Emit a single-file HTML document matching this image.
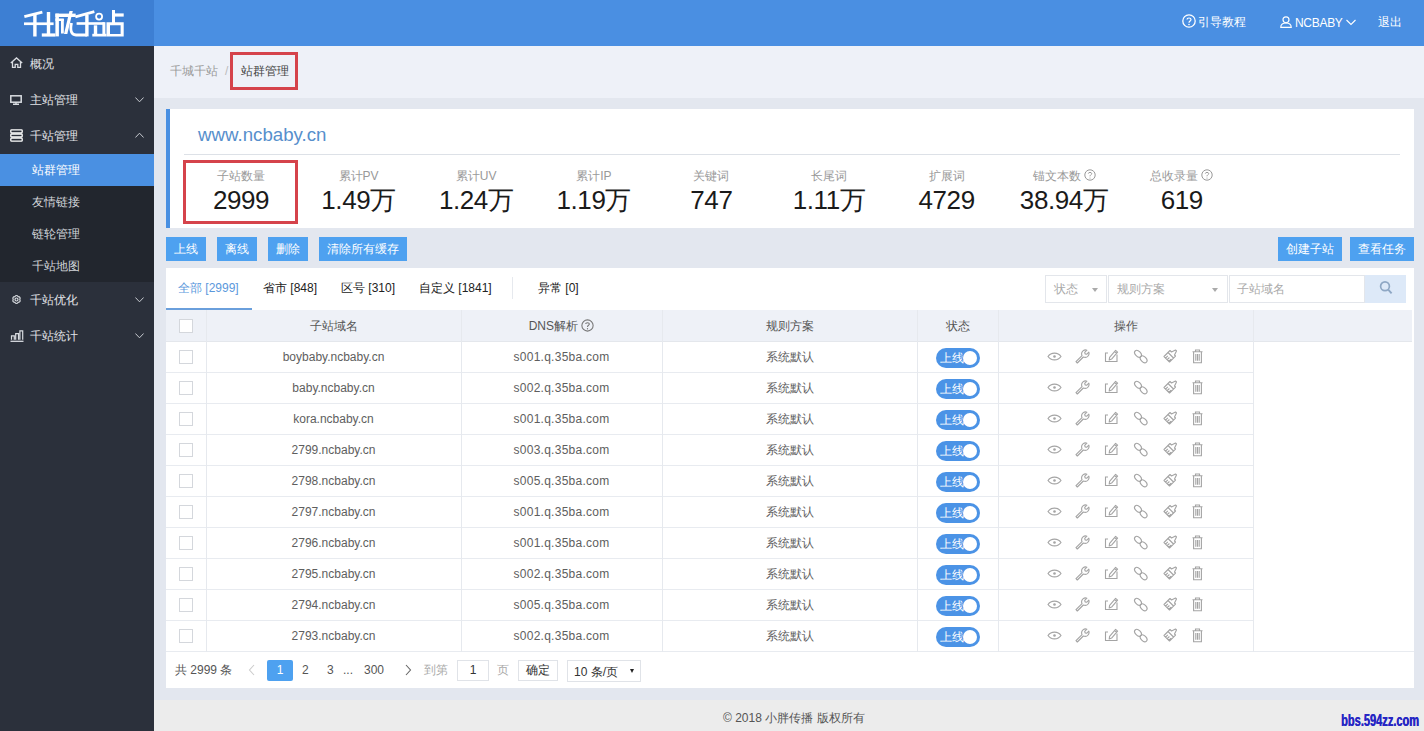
<!DOCTYPE html>
<html><head><meta charset="utf-8">
<style>
*{margin:0;padding:0;box-sizing:border-box}
html,body{width:1424px;height:731px;overflow:hidden;font-family:"Liberation Sans",sans-serif;background:#eef1f8;position:relative}
.a{position:absolute}
#hdr{left:0;top:0;width:1424px;height:46px;background:#4a8fe2}
#logo{left:0;top:0;width:154px;height:46px;background:#3d7fd3}
#side{left:0;top:46px;width:154px;height:685px;background:#2b303b}
#subbg{left:0;top:154px;width:154px;height:128px;background:#22262e}
#act{left:0;top:154px;width:154px;height:32px;background:#4a90e2}
.mi{position:absolute;left:30px;height:36px;line-height:36px;color:#e2e4e8;font-size:12px;white-space:nowrap}
.sub{position:absolute;left:32px;height:32px;line-height:32px;color:#d3d6db;font-size:12px;white-space:nowrap}
.ico{position:absolute;left:10px}
.chev{position:absolute;left:135px}
#crumb{left:154px;top:46px;width:1270px;height:52px;background:#eef1f8}
#band{left:154px;top:98px;width:1270px;height:602px;background:#e3e7ef}
#foot{left:154px;top:700px;width:1270px;height:31px;background:#ececec}
.card{position:absolute;background:#fff}
.stat{position:absolute;top:160px;width:118px;text-align:center}
.stat .l{font-size:12px;color:#999;line-height:16px;height:16px;margin-top:8px;white-space:nowrap}
.stat .v{font-size:26px;color:#1a1a1a;line-height:30px;margin-top:1px;letter-spacing:-0.4px;white-space:nowrap}
.btn{position:absolute;top:237px;height:24px;line-height:24px;background:#4ea1f0;color:#fff;font-size:12px;text-align:center;white-space:nowrap}
.tab{position:absolute;top:280px;font-size:12px;line-height:16px;color:#222;white-space:nowrap}
.th{position:absolute;top:0;height:32px;line-height:32px;font-size:12px;color:#555;text-align:center;white-space:nowrap}
.cell{position:absolute;top:0;height:31px;line-height:30px;font-size:12px;color:#5e5e5e;text-align:center;white-space:nowrap}
.vl{position:absolute;width:1px;background:#e6e9ee}
.hl{position:absolute;height:1px;background:#e8ebf0}
.cb{position:absolute;width:14px;height:14px;border:1px solid #d4d7dc;background:#fff}
.tg{position:absolute;width:44px;height:20px;border-radius:10px;background:#4b93e6}
.tg b{position:absolute;right:3px;top:3px;width:14px;height:14px;border-radius:7px;background:#fff}
.tg span{position:absolute;left:4px;top:0;line-height:20px;font-size:12px;color:#fff;font-weight:normal}
.op{position:absolute}
</style></head><body>
<div class="a" id="hdr"></div><div class="a" id="logo"></div>
<div class="a" id="side"></div><div class="a" id="subbg"></div><div class="a" id="act"></div>
<svg class="a" style="left:0;top:0" width="154" height="46" viewBox="0 0 154 46"><g fill="#fff"><path d="M24 15.2 L42 10.8 L42.7 13.5 L24.7 17.9 Z"/><rect x="24" y="22.4" width="29.6" height="2.7"/><rect x="33.2" y="14.5" width="3.4" height="22"/><rect x="46.8" y="12" width="3.4" height="23.6"/><rect x="41.8" y="33.4" width="13.6" height="3.2"/><rect x="55.4" y="13.6" width="20.3" height="3.4"/><rect x="55.4" y="13.6" width="3.5" height="22.8"/><rect x="61" y="19" width="2.8" height="14.5"/><rect x="55.4" y="18.5" width="8.4" height="2.5"/><path d="M69.5 11 L72.8 11 L67.3 34 L64 34 Z"/><path d="M75 15.6 L94 10.2 L94.7 12.9 L75.7 18.3 Z"/><rect x="76.6" y="22.2" width="27.8" height="2.6"/><rect x="85.2" y="15" width="3.4" height="21.4"/><rect x="92.3" y="33.8" width="14.2" height="2.7"/><rect x="93.8" y="25.3" width="3.4" height="9.5"/><rect x="102.4" y="22.2" width="3" height="12.5"/><rect x="112" y="10" width="3" height="13"/><rect x="113" y="13.4" width="10.7" height="3.2"/><path d="M106.5 22.2 H123.7 V36.4 H106.5 Z M110 25.3 V33.9 H120.6 V25.3 Z" fill-rule="evenodd"/></g><path d="M71.5 23 Q69 34.5 76 35 L87 35" fill="none" stroke="#fff" stroke-width="2.8"/><circle cx="99.1" cy="16.6" r="3" fill="none" stroke="#fff" stroke-width="1.8"/></svg>
<div class="mi" style="top:46px">概况</div>
<div class="mi" style="top:82px">主站管理</div>
<svg class="chev" style="top:97px" width="9" height="6" viewBox="0 0 9 6"><path d="M0.4 0.5 L4.5 4.8 L8.6 0.5" fill="none" stroke="#c9ccd2" stroke-width="1"/></svg>
<div class="mi" style="top:118px">千站管理</div>
<svg class="chev" style="top:132px" width="9" height="6" viewBox="0 0 9 6"><path d="M0.4 5.5 L4.5 1.2 L8.6 5.5" fill="none" stroke="#c9ccd2" stroke-width="1"/></svg>
<div class="mi" style="top:282px">千站优化</div>
<svg class="chev" style="top:297px" width="9" height="6" viewBox="0 0 9 6"><path d="M0.4 0.5 L4.5 4.8 L8.6 0.5" fill="none" stroke="#c9ccd2" stroke-width="1"/></svg>
<div class="mi" style="top:318px">千站统计</div>
<svg class="chev" style="top:333px" width="9" height="6" viewBox="0 0 9 6"><path d="M0.4 0.5 L4.5 4.8 L8.6 0.5" fill="none" stroke="#c9ccd2" stroke-width="1"/></svg>
<div class="sub" style="top:154px;color:#fff">站群管理</div>
<div class="sub" style="top:186px;">友情链接</div>
<div class="sub" style="top:218px;">链轮管理</div>
<div class="sub" style="top:250px;">千站地图</div>
<svg class="ico" style="top:57px" width="13" height="11" viewBox="0 0 13 11"><path d="M0.8 6 L6.5 0.9 L12.2 6 M2.5 4.6 V10.3 H5.2 V7.3 H7.8 V10.3 H10.5 V4.6" fill="none" stroke="#d9dce1" stroke-width="1.3"/></svg>
<svg class="ico" style="top:95px" width="12" height="10" viewBox="0 0 12 10"><rect x="0.8" y="0.8" width="10.4" height="6.4" fill="none" stroke="#d9dce1" stroke-width="1.5"/><path d="M3 9.3 H9 M6 7 V9.3" stroke="#d9dce1" stroke-width="1.4"/></svg>
<svg class="ico" style="top:129px" width="13" height="13" viewBox="0 0 13 13"><rect x="0.8" y="0.8" width="11.4" height="3" rx="0.8" fill="none" stroke="#fff" stroke-width="1.3"/><rect x="0.8" y="5" width="11.4" height="3" rx="0.8" fill="none" stroke="#fff" stroke-width="1.3"/><rect x="0.8" y="9.2" width="11.4" height="3" rx="0.8" fill="none" stroke="#fff" stroke-width="1.3"/></svg>
<svg class="ico" style="left:11px;top:294px" width="11" height="11" viewBox="0 0 11 11"><path d="M7.15 2.64 Q9.96 2.92 8.80 5.50 Q9.96 8.08 7.15 8.36 Q5.50 10.65 3.85 8.36 Q1.04 8.08 2.20 5.50 Q1.04 2.92 3.85 2.64 Q5.50 0.35 7.15 2.64 Z" fill="none" stroke="#d9dce1" stroke-width="1.2" stroke-linejoin="round"/><circle cx="5.5" cy="5.5" r="1.5" fill="none" stroke="#d9dce1" stroke-width="1.2"/></svg>
<svg class="ico" style="top:330px" width="14" height="12" viewBox="0 0 14 12"><path d="M0.5 11.3 H13.5" stroke="#d9dce1" stroke-width="1.3"/><path d="M1.5 9.8 V5.8 H4.3 V9.8 M5.7 9.8 V3.6 H8.5 V9.8 M9.9 9.8 V0.8 H12.7 V9.8" fill="none" stroke="#d9dce1" stroke-width="1.2"/></svg>
<div class="a" style="left:154px;top:46px;width:6px;height:685px;background:#eff2f8"></div>
<svg class="a" style="left:1182px;top:14px" width="14" height="14" viewBox="0 0 14 14"><circle cx="7" cy="7" r="6.2" fill="none" stroke="#fff" stroke-width="1.3"/><path d="M5 5.5 C5 3.5 9 3.5 9 5.5 C9 7 7 7 7 8.8" fill="none" stroke="#fff" stroke-width="1.2"/><circle cx="7" cy="10.5" r="0.8" fill="#fff"/></svg>
<div class="a" style="left:1198px;top:14px;font-size:12px;line-height:16px;color:#fff">引导教程</div>
<svg class="a" style="left:1280px;top:16px" width="12" height="12" viewBox="0 0 12 12"><circle cx="6" cy="3.8" r="3" fill="none" stroke="#fff" stroke-width="1.2"/><path d="M0.8 11.3 C0.8 8 3 7 6 7 C9 7 11.2 8 11.2 11.3 Z" fill="none" stroke="#fff" stroke-width="1.2"/></svg>
<div class="a" style="left:1295px;top:15px;font-size:12px;line-height:16px;color:#fff;letter-spacing:-0.3px">NCBABY</div>
<svg class="a" style="left:1346px;top:19px" width="10" height="7" viewBox="0 0 10 7"><path d="M0.5 1 L5 5.5 L9.5 1" fill="none" stroke="#fff" stroke-width="1.1"/></svg>
<div class="a" style="left:1378px;top:14px;font-size:12px;line-height:16px;color:#fff">退出</div>
<div class="a" id="crumb"></div><div class="a" id="band"></div><div class="a" id="foot"></div>
<div class="a" style="left:170px;top:63px;font-size:12px;line-height:16px;color:#999">千城千站</div>
<div class="a" style="left:225px;top:63px;font-size:12px;line-height:16px;color:#bbb">/</div>
<div class="a" style="left:241px;top:63px;font-size:12px;line-height:16px;color:#444">站群管理</div>
<div class="a" style="left:230px;top:52px;width:68px;height:38px;border:3px solid #d5434b"></div>
<div class="card" style="left:166px;top:109px;width:1248px;height:119px"></div>
<div class="a" style="left:166px;top:109px;width:4px;height:119px;background:#4a90e2"></div>
<div class="a" style="left:198px;top:124px;font-size:18.7px;line-height:22px;color:#578fcc">www.ncbaby.cn</div>
<div class="a" style="left:184px;top:154px;width:1216px;height:1px;background:#dde1e7"></div>
<div class="stat" style="left:182.0px"><div class="l">子站数量</div><div class="v">2999</div></div>
<div class="stat" style="left:299.6px"><div class="l">累计PV</div><div class="v">1.49万</div></div>
<div class="stat" style="left:417.2px"><div class="l">累计UV</div><div class="v">1.24万</div></div>
<div class="stat" style="left:534.8px"><div class="l">累计IP</div><div class="v">1.19万</div></div>
<div class="stat" style="left:652.4px"><div class="l">关键词</div><div class="v">747</div></div>
<div class="stat" style="left:770.0px"><div class="l">长尾词</div><div class="v">1.11万</div></div>
<div class="stat" style="left:887.6px"><div class="l">扩展词</div><div class="v">4729</div></div>
<div class="stat" style="left:1005.2px"><div class="l">锚文本数 <svg width="12" height="12" viewBox="0 0 12 12" style="vertical-align:-1px"><circle cx="6" cy="6" r="5.2" fill="none" stroke="#999" stroke-width="1"/><path d="M4.3 4.6 C4.3 3 7.7 3 7.7 4.6 C7.7 5.8 6 5.8 6 7.3" fill="none" stroke="#999" stroke-width="1"/><circle cx="6" cy="9" r="0.6" fill="#999"/></svg></div><div class="v">38.94万</div></div>
<div class="stat" style="left:1122.8px"><div class="l">总收录量 <svg width="12" height="12" viewBox="0 0 12 12" style="vertical-align:-1px"><circle cx="6" cy="6" r="5.2" fill="none" stroke="#999" stroke-width="1"/><path d="M4.3 4.6 C4.3 3 7.7 3 7.7 4.6 C7.7 5.8 6 5.8 6 7.3" fill="none" stroke="#999" stroke-width="1"/><circle cx="6" cy="9" r="0.6" fill="#999"/></svg></div><div class="v">619</div></div>
<div class="a" style="left:183px;top:160px;width:115px;height:64px;border:3px solid #d5434b"></div>
<div class="btn" style="left:166px;width:40px">上线</div>
<div class="btn" style="left:217px;width:40px">离线</div>
<div class="btn" style="left:268px;width:40px">删除</div>
<div class="btn" style="left:319px;width:88px">清除所有缓存</div>
<div class="btn" style="left:1278px;width:64px">创建子站</div>
<div class="btn" style="left:1350px;width:64px">查看任务</div>
<div class="card" style="left:166px;top:268px;width:1248px;height:420px"></div>
<div class="tab" style="left:178px;color:#5b98dc">全部 [2999]</div>
<div class="a" style="left:166px;top:308px;width:86px;height:2px;background:#6a9fdc"></div>
<div class="tab" style="left:263px">省市 [848]</div>
<div class="tab" style="left:341px">区号 [310]</div>
<div class="tab" style="left:419px">自定义 [1841]</div>
<div class="a" style="left:512px;top:277px;width:1px;height:22px;background:#e6e9ee"></div>
<div class="tab" style="left:538px">异常 [0]</div>
<div class="a" style="left:1045px;top:275px;width:62px;height:28px;border:1px solid #e3e6eb;background:#fff"></div>
<div class="a" style="left:1054px;top:281px;font-size:12px;line-height:16px;color:#aaa">状态</div>
<div class="a" style="left:1092px;top:288px;width:0;height:0;border-left:3.5px solid transparent;border-right:3.5px solid transparent;border-top:4px solid #aaa"></div>
<div class="a" style="left:1108px;top:275px;width:120px;height:28px;border:1px solid #e3e6eb;background:#fff"></div>
<div class="a" style="left:1117px;top:281px;font-size:12px;line-height:16px;color:#aaa">规则方案</div>
<div class="a" style="left:1212px;top:288px;width:0;height:0;border-left:3.5px solid transparent;border-right:3.5px solid transparent;border-top:4px solid #aaa"></div>
<div class="a" style="left:1229px;top:275px;width:136px;height:28px;border:1px solid #e3e6eb;background:#fff"></div>
<div class="a" style="left:1237px;top:281px;font-size:12px;line-height:16px;color:#aaa">子站域名</div>
<div class="a" style="left:1365px;top:275px;width:41px;height:28px;background:#dde9f8"></div>
<svg class="a" style="left:1379px;top:280px" width="14" height="15" viewBox="0 0 14 15"><circle cx="6" cy="6.3" r="4.4" fill="none" stroke="#8ea7c4" stroke-width="1.7"/><path d="M9.2 9.6 L12.6 13.4" stroke="#8ea7c4" stroke-width="1.9"/></svg>
<div class="a" style="left:166px;top:310px;width:1246px;height:32px;background:#eef1f7"></div>
<div class="a" style="left:166px;top:310px;width:1246px;height:32px">
<div class="th" style="left:40px;width:255px">子站域名</div>
<div class="th" style="left:295px;width:201px">DNS解析 <svg width="13" height="13" viewBox="0 0 12 12" style="vertical-align:-2px"><circle cx="6" cy="6" r="5.2" fill="none" stroke="#777" stroke-width="1"/><path d="M4.3 4.6 C4.3 3 7.7 3 7.7 4.6 C7.7 5.8 6 5.8 6 7.3" fill="none" stroke="#777" stroke-width="1"/><circle cx="6" cy="9" r="0.6" fill="#777"/></svg></div>
<div class="th" style="left:496px;width:255px">规则方案</div>
<div class="th" style="left:751px;width:81px">状态</div>
<div class="th" style="left:832px;width:255px">操作</div>
</div>
<div class="cb" style="left:179px;top:319px"></div>
<div class="a" style="left:166px;top:342px;width:1087px;height:31px;background:#fff">
<div class="cell" style="left:40px;width:255px">boybaby.ncbaby.cn</div>
<div class="cell" style="left:295px;width:201px;letter-spacing:0.25px">s001.q.35ba.com</div>
<div class="cell" style="left:496px;width:255px">系统默认</div>
</div>
<div class="hl" style="left:166px;top:372px;width:1087px"></div>
<div class="cb" style="left:179px;top:350px"></div>
<div class="tg" style="left:936px;top:348px"><span>上线</span><b></b></div>
<svg class="op" style="left:1047px;top:351px" width="15" height="11" viewBox="0 0 15 11"><path d="M1 5.5 C4 1 11 1 14 5.5 C11 10 4 10 1 5.5 Z" fill="none" stroke="#a4a4a4" stroke-width="1.1"/><circle cx="7.5" cy="5.5" r="1.3" fill="#a4a4a4"/></svg><svg class="op" style="left:1075px;top:349px" width="15" height="15" viewBox="0 0 15 15"><path d="M2.3 14 L1 12.7 L7 6.7 C6.3 5 6.7 3 8 1.9 C9.1 1 10.6 0.7 11.9 1.2 L9.7 3.4 L10.1 4.9 L11.6 5.3 L13.8 3.1 C14.3 4.4 14 5.9 13.1 7 C12 8.3 10 8.7 8.3 8 Z" fill="none" stroke="#a4a4a4" stroke-width="1.1" stroke-linejoin="round"/></svg><svg class="op" style="left:1104px;top:349px" width="16" height="14" viewBox="0 0 16 14"><path d="M4 4 H1.5 V12.5 H13 V5.5" fill="none" stroke="#a4a4a4" stroke-width="1.1"/><path d="M5.2 11 L5.6 8.4 L11.6 1.4 L13.6 3.1 L7.6 10.1 Z M10.6 2.6 L12.6 4.3" fill="none" stroke="#a4a4a4" stroke-width="1.1" stroke-linejoin="round"/></svg><svg class="op" style="left:1133px;top:349px" width="16" height="15" viewBox="0 0 16 15"><g fill="none" stroke="#a4a4a4" stroke-width="1.15"><ellipse cx="5" cy="4.8" rx="4" ry="2.6" transform="rotate(45 5 4.8)"/><ellipse cx="10.6" cy="10.3" rx="4" ry="2.6" transform="rotate(45 10.6 10.3)"/></g></svg><svg class="op" style="left:1162px;top:349px" width="16" height="15" viewBox="0 0 16 15"><path d="M6 3.5 L11.5 9 L7.5 13 L2 7.5 Z M3.6 9.1 L5.8 6.9 M5.2 10.7 L7.4 8.5 M6.8 12.3 L9 10.1" fill="none" stroke="#a4a4a4" stroke-width="1.1" stroke-linejoin="round"/><path d="M6 3.5 L8 1.5 L9.5 3 L13.5 1 L14.5 2 L12.5 6 L13.5 7 L11.5 9" fill="none" stroke="#a4a4a4" stroke-width="1.1" stroke-linejoin="round"/></svg><svg class="op" style="left:1192px;top:349px" width="11" height="15" viewBox="0 0 11 15"><path d="M0.5 2.8 H10.5 M3.5 2.8 V1 H7.5 V2.8 M1.6 2.8 V13.8 H9.4 V2.8 M3.8 5 V11.8 M5.5 5 V11.8 M7.2 5 V11.8" fill="none" stroke="#a4a4a4" stroke-width="1.1"/></svg>
<div class="a" style="left:166px;top:373px;width:1087px;height:31px;background:#fff">
<div class="cell" style="left:40px;width:255px">baby.ncbaby.cn</div>
<div class="cell" style="left:295px;width:201px;letter-spacing:0.25px">s002.q.35ba.com</div>
<div class="cell" style="left:496px;width:255px">系统默认</div>
</div>
<div class="hl" style="left:166px;top:403px;width:1087px"></div>
<div class="cb" style="left:179px;top:381px"></div>
<div class="tg" style="left:936px;top:379px"><span>上线</span><b></b></div>
<svg class="op" style="left:1047px;top:382px" width="15" height="11" viewBox="0 0 15 11"><path d="M1 5.5 C4 1 11 1 14 5.5 C11 10 4 10 1 5.5 Z" fill="none" stroke="#a4a4a4" stroke-width="1.1"/><circle cx="7.5" cy="5.5" r="1.3" fill="#a4a4a4"/></svg><svg class="op" style="left:1075px;top:380px" width="15" height="15" viewBox="0 0 15 15"><path d="M2.3 14 L1 12.7 L7 6.7 C6.3 5 6.7 3 8 1.9 C9.1 1 10.6 0.7 11.9 1.2 L9.7 3.4 L10.1 4.9 L11.6 5.3 L13.8 3.1 C14.3 4.4 14 5.9 13.1 7 C12 8.3 10 8.7 8.3 8 Z" fill="none" stroke="#a4a4a4" stroke-width="1.1" stroke-linejoin="round"/></svg><svg class="op" style="left:1104px;top:380px" width="16" height="14" viewBox="0 0 16 14"><path d="M4 4 H1.5 V12.5 H13 V5.5" fill="none" stroke="#a4a4a4" stroke-width="1.1"/><path d="M5.2 11 L5.6 8.4 L11.6 1.4 L13.6 3.1 L7.6 10.1 Z M10.6 2.6 L12.6 4.3" fill="none" stroke="#a4a4a4" stroke-width="1.1" stroke-linejoin="round"/></svg><svg class="op" style="left:1133px;top:380px" width="16" height="15" viewBox="0 0 16 15"><g fill="none" stroke="#a4a4a4" stroke-width="1.15"><ellipse cx="5" cy="4.8" rx="4" ry="2.6" transform="rotate(45 5 4.8)"/><ellipse cx="10.6" cy="10.3" rx="4" ry="2.6" transform="rotate(45 10.6 10.3)"/></g></svg><svg class="op" style="left:1162px;top:380px" width="16" height="15" viewBox="0 0 16 15"><path d="M6 3.5 L11.5 9 L7.5 13 L2 7.5 Z M3.6 9.1 L5.8 6.9 M5.2 10.7 L7.4 8.5 M6.8 12.3 L9 10.1" fill="none" stroke="#a4a4a4" stroke-width="1.1" stroke-linejoin="round"/><path d="M6 3.5 L8 1.5 L9.5 3 L13.5 1 L14.5 2 L12.5 6 L13.5 7 L11.5 9" fill="none" stroke="#a4a4a4" stroke-width="1.1" stroke-linejoin="round"/></svg><svg class="op" style="left:1192px;top:380px" width="11" height="15" viewBox="0 0 11 15"><path d="M0.5 2.8 H10.5 M3.5 2.8 V1 H7.5 V2.8 M1.6 2.8 V13.8 H9.4 V2.8 M3.8 5 V11.8 M5.5 5 V11.8 M7.2 5 V11.8" fill="none" stroke="#a4a4a4" stroke-width="1.1"/></svg>
<div class="a" style="left:166px;top:404px;width:1087px;height:31px;background:#fff">
<div class="cell" style="left:40px;width:255px">kora.ncbaby.cn</div>
<div class="cell" style="left:295px;width:201px;letter-spacing:0.25px">s001.q.35ba.com</div>
<div class="cell" style="left:496px;width:255px">系统默认</div>
</div>
<div class="hl" style="left:166px;top:434px;width:1087px"></div>
<div class="cb" style="left:179px;top:412px"></div>
<div class="tg" style="left:936px;top:410px"><span>上线</span><b></b></div>
<svg class="op" style="left:1047px;top:413px" width="15" height="11" viewBox="0 0 15 11"><path d="M1 5.5 C4 1 11 1 14 5.5 C11 10 4 10 1 5.5 Z" fill="none" stroke="#a4a4a4" stroke-width="1.1"/><circle cx="7.5" cy="5.5" r="1.3" fill="#a4a4a4"/></svg><svg class="op" style="left:1075px;top:411px" width="15" height="15" viewBox="0 0 15 15"><path d="M2.3 14 L1 12.7 L7 6.7 C6.3 5 6.7 3 8 1.9 C9.1 1 10.6 0.7 11.9 1.2 L9.7 3.4 L10.1 4.9 L11.6 5.3 L13.8 3.1 C14.3 4.4 14 5.9 13.1 7 C12 8.3 10 8.7 8.3 8 Z" fill="none" stroke="#a4a4a4" stroke-width="1.1" stroke-linejoin="round"/></svg><svg class="op" style="left:1104px;top:411px" width="16" height="14" viewBox="0 0 16 14"><path d="M4 4 H1.5 V12.5 H13 V5.5" fill="none" stroke="#a4a4a4" stroke-width="1.1"/><path d="M5.2 11 L5.6 8.4 L11.6 1.4 L13.6 3.1 L7.6 10.1 Z M10.6 2.6 L12.6 4.3" fill="none" stroke="#a4a4a4" stroke-width="1.1" stroke-linejoin="round"/></svg><svg class="op" style="left:1133px;top:411px" width="16" height="15" viewBox="0 0 16 15"><g fill="none" stroke="#a4a4a4" stroke-width="1.15"><ellipse cx="5" cy="4.8" rx="4" ry="2.6" transform="rotate(45 5 4.8)"/><ellipse cx="10.6" cy="10.3" rx="4" ry="2.6" transform="rotate(45 10.6 10.3)"/></g></svg><svg class="op" style="left:1162px;top:411px" width="16" height="15" viewBox="0 0 16 15"><path d="M6 3.5 L11.5 9 L7.5 13 L2 7.5 Z M3.6 9.1 L5.8 6.9 M5.2 10.7 L7.4 8.5 M6.8 12.3 L9 10.1" fill="none" stroke="#a4a4a4" stroke-width="1.1" stroke-linejoin="round"/><path d="M6 3.5 L8 1.5 L9.5 3 L13.5 1 L14.5 2 L12.5 6 L13.5 7 L11.5 9" fill="none" stroke="#a4a4a4" stroke-width="1.1" stroke-linejoin="round"/></svg><svg class="op" style="left:1192px;top:411px" width="11" height="15" viewBox="0 0 11 15"><path d="M0.5 2.8 H10.5 M3.5 2.8 V1 H7.5 V2.8 M1.6 2.8 V13.8 H9.4 V2.8 M3.8 5 V11.8 M5.5 5 V11.8 M7.2 5 V11.8" fill="none" stroke="#a4a4a4" stroke-width="1.1"/></svg>
<div class="a" style="left:166px;top:435px;width:1087px;height:31px;background:#fff">
<div class="cell" style="left:40px;width:255px">2799.ncbaby.cn</div>
<div class="cell" style="left:295px;width:201px;letter-spacing:0.25px">s003.q.35ba.com</div>
<div class="cell" style="left:496px;width:255px">系统默认</div>
</div>
<div class="hl" style="left:166px;top:465px;width:1087px"></div>
<div class="cb" style="left:179px;top:443px"></div>
<div class="tg" style="left:936px;top:441px"><span>上线</span><b></b></div>
<svg class="op" style="left:1047px;top:444px" width="15" height="11" viewBox="0 0 15 11"><path d="M1 5.5 C4 1 11 1 14 5.5 C11 10 4 10 1 5.5 Z" fill="none" stroke="#a4a4a4" stroke-width="1.1"/><circle cx="7.5" cy="5.5" r="1.3" fill="#a4a4a4"/></svg><svg class="op" style="left:1075px;top:442px" width="15" height="15" viewBox="0 0 15 15"><path d="M2.3 14 L1 12.7 L7 6.7 C6.3 5 6.7 3 8 1.9 C9.1 1 10.6 0.7 11.9 1.2 L9.7 3.4 L10.1 4.9 L11.6 5.3 L13.8 3.1 C14.3 4.4 14 5.9 13.1 7 C12 8.3 10 8.7 8.3 8 Z" fill="none" stroke="#a4a4a4" stroke-width="1.1" stroke-linejoin="round"/></svg><svg class="op" style="left:1104px;top:442px" width="16" height="14" viewBox="0 0 16 14"><path d="M4 4 H1.5 V12.5 H13 V5.5" fill="none" stroke="#a4a4a4" stroke-width="1.1"/><path d="M5.2 11 L5.6 8.4 L11.6 1.4 L13.6 3.1 L7.6 10.1 Z M10.6 2.6 L12.6 4.3" fill="none" stroke="#a4a4a4" stroke-width="1.1" stroke-linejoin="round"/></svg><svg class="op" style="left:1133px;top:442px" width="16" height="15" viewBox="0 0 16 15"><g fill="none" stroke="#a4a4a4" stroke-width="1.15"><ellipse cx="5" cy="4.8" rx="4" ry="2.6" transform="rotate(45 5 4.8)"/><ellipse cx="10.6" cy="10.3" rx="4" ry="2.6" transform="rotate(45 10.6 10.3)"/></g></svg><svg class="op" style="left:1162px;top:442px" width="16" height="15" viewBox="0 0 16 15"><path d="M6 3.5 L11.5 9 L7.5 13 L2 7.5 Z M3.6 9.1 L5.8 6.9 M5.2 10.7 L7.4 8.5 M6.8 12.3 L9 10.1" fill="none" stroke="#a4a4a4" stroke-width="1.1" stroke-linejoin="round"/><path d="M6 3.5 L8 1.5 L9.5 3 L13.5 1 L14.5 2 L12.5 6 L13.5 7 L11.5 9" fill="none" stroke="#a4a4a4" stroke-width="1.1" stroke-linejoin="round"/></svg><svg class="op" style="left:1192px;top:442px" width="11" height="15" viewBox="0 0 11 15"><path d="M0.5 2.8 H10.5 M3.5 2.8 V1 H7.5 V2.8 M1.6 2.8 V13.8 H9.4 V2.8 M3.8 5 V11.8 M5.5 5 V11.8 M7.2 5 V11.8" fill="none" stroke="#a4a4a4" stroke-width="1.1"/></svg>
<div class="a" style="left:166px;top:466px;width:1087px;height:31px;background:#fff">
<div class="cell" style="left:40px;width:255px">2798.ncbaby.cn</div>
<div class="cell" style="left:295px;width:201px;letter-spacing:0.25px">s005.q.35ba.com</div>
<div class="cell" style="left:496px;width:255px">系统默认</div>
</div>
<div class="hl" style="left:166px;top:496px;width:1087px"></div>
<div class="cb" style="left:179px;top:474px"></div>
<div class="tg" style="left:936px;top:472px"><span>上线</span><b></b></div>
<svg class="op" style="left:1047px;top:475px" width="15" height="11" viewBox="0 0 15 11"><path d="M1 5.5 C4 1 11 1 14 5.5 C11 10 4 10 1 5.5 Z" fill="none" stroke="#a4a4a4" stroke-width="1.1"/><circle cx="7.5" cy="5.5" r="1.3" fill="#a4a4a4"/></svg><svg class="op" style="left:1075px;top:473px" width="15" height="15" viewBox="0 0 15 15"><path d="M2.3 14 L1 12.7 L7 6.7 C6.3 5 6.7 3 8 1.9 C9.1 1 10.6 0.7 11.9 1.2 L9.7 3.4 L10.1 4.9 L11.6 5.3 L13.8 3.1 C14.3 4.4 14 5.9 13.1 7 C12 8.3 10 8.7 8.3 8 Z" fill="none" stroke="#a4a4a4" stroke-width="1.1" stroke-linejoin="round"/></svg><svg class="op" style="left:1104px;top:473px" width="16" height="14" viewBox="0 0 16 14"><path d="M4 4 H1.5 V12.5 H13 V5.5" fill="none" stroke="#a4a4a4" stroke-width="1.1"/><path d="M5.2 11 L5.6 8.4 L11.6 1.4 L13.6 3.1 L7.6 10.1 Z M10.6 2.6 L12.6 4.3" fill="none" stroke="#a4a4a4" stroke-width="1.1" stroke-linejoin="round"/></svg><svg class="op" style="left:1133px;top:473px" width="16" height="15" viewBox="0 0 16 15"><g fill="none" stroke="#a4a4a4" stroke-width="1.15"><ellipse cx="5" cy="4.8" rx="4" ry="2.6" transform="rotate(45 5 4.8)"/><ellipse cx="10.6" cy="10.3" rx="4" ry="2.6" transform="rotate(45 10.6 10.3)"/></g></svg><svg class="op" style="left:1162px;top:473px" width="16" height="15" viewBox="0 0 16 15"><path d="M6 3.5 L11.5 9 L7.5 13 L2 7.5 Z M3.6 9.1 L5.8 6.9 M5.2 10.7 L7.4 8.5 M6.8 12.3 L9 10.1" fill="none" stroke="#a4a4a4" stroke-width="1.1" stroke-linejoin="round"/><path d="M6 3.5 L8 1.5 L9.5 3 L13.5 1 L14.5 2 L12.5 6 L13.5 7 L11.5 9" fill="none" stroke="#a4a4a4" stroke-width="1.1" stroke-linejoin="round"/></svg><svg class="op" style="left:1192px;top:473px" width="11" height="15" viewBox="0 0 11 15"><path d="M0.5 2.8 H10.5 M3.5 2.8 V1 H7.5 V2.8 M1.6 2.8 V13.8 H9.4 V2.8 M3.8 5 V11.8 M5.5 5 V11.8 M7.2 5 V11.8" fill="none" stroke="#a4a4a4" stroke-width="1.1"/></svg>
<div class="a" style="left:166px;top:497px;width:1087px;height:31px;background:#fff">
<div class="cell" style="left:40px;width:255px">2797.ncbaby.cn</div>
<div class="cell" style="left:295px;width:201px;letter-spacing:0.25px">s001.q.35ba.com</div>
<div class="cell" style="left:496px;width:255px">系统默认</div>
</div>
<div class="hl" style="left:166px;top:527px;width:1087px"></div>
<div class="cb" style="left:179px;top:505px"></div>
<div class="tg" style="left:936px;top:503px"><span>上线</span><b></b></div>
<svg class="op" style="left:1047px;top:506px" width="15" height="11" viewBox="0 0 15 11"><path d="M1 5.5 C4 1 11 1 14 5.5 C11 10 4 10 1 5.5 Z" fill="none" stroke="#a4a4a4" stroke-width="1.1"/><circle cx="7.5" cy="5.5" r="1.3" fill="#a4a4a4"/></svg><svg class="op" style="left:1075px;top:504px" width="15" height="15" viewBox="0 0 15 15"><path d="M2.3 14 L1 12.7 L7 6.7 C6.3 5 6.7 3 8 1.9 C9.1 1 10.6 0.7 11.9 1.2 L9.7 3.4 L10.1 4.9 L11.6 5.3 L13.8 3.1 C14.3 4.4 14 5.9 13.1 7 C12 8.3 10 8.7 8.3 8 Z" fill="none" stroke="#a4a4a4" stroke-width="1.1" stroke-linejoin="round"/></svg><svg class="op" style="left:1104px;top:504px" width="16" height="14" viewBox="0 0 16 14"><path d="M4 4 H1.5 V12.5 H13 V5.5" fill="none" stroke="#a4a4a4" stroke-width="1.1"/><path d="M5.2 11 L5.6 8.4 L11.6 1.4 L13.6 3.1 L7.6 10.1 Z M10.6 2.6 L12.6 4.3" fill="none" stroke="#a4a4a4" stroke-width="1.1" stroke-linejoin="round"/></svg><svg class="op" style="left:1133px;top:504px" width="16" height="15" viewBox="0 0 16 15"><g fill="none" stroke="#a4a4a4" stroke-width="1.15"><ellipse cx="5" cy="4.8" rx="4" ry="2.6" transform="rotate(45 5 4.8)"/><ellipse cx="10.6" cy="10.3" rx="4" ry="2.6" transform="rotate(45 10.6 10.3)"/></g></svg><svg class="op" style="left:1162px;top:504px" width="16" height="15" viewBox="0 0 16 15"><path d="M6 3.5 L11.5 9 L7.5 13 L2 7.5 Z M3.6 9.1 L5.8 6.9 M5.2 10.7 L7.4 8.5 M6.8 12.3 L9 10.1" fill="none" stroke="#a4a4a4" stroke-width="1.1" stroke-linejoin="round"/><path d="M6 3.5 L8 1.5 L9.5 3 L13.5 1 L14.5 2 L12.5 6 L13.5 7 L11.5 9" fill="none" stroke="#a4a4a4" stroke-width="1.1" stroke-linejoin="round"/></svg><svg class="op" style="left:1192px;top:504px" width="11" height="15" viewBox="0 0 11 15"><path d="M0.5 2.8 H10.5 M3.5 2.8 V1 H7.5 V2.8 M1.6 2.8 V13.8 H9.4 V2.8 M3.8 5 V11.8 M5.5 5 V11.8 M7.2 5 V11.8" fill="none" stroke="#a4a4a4" stroke-width="1.1"/></svg>
<div class="a" style="left:166px;top:528px;width:1087px;height:31px;background:#fff">
<div class="cell" style="left:40px;width:255px">2796.ncbaby.cn</div>
<div class="cell" style="left:295px;width:201px;letter-spacing:0.25px">s001.q.35ba.com</div>
<div class="cell" style="left:496px;width:255px">系统默认</div>
</div>
<div class="hl" style="left:166px;top:558px;width:1087px"></div>
<div class="cb" style="left:179px;top:536px"></div>
<div class="tg" style="left:936px;top:534px"><span>上线</span><b></b></div>
<svg class="op" style="left:1047px;top:537px" width="15" height="11" viewBox="0 0 15 11"><path d="M1 5.5 C4 1 11 1 14 5.5 C11 10 4 10 1 5.5 Z" fill="none" stroke="#a4a4a4" stroke-width="1.1"/><circle cx="7.5" cy="5.5" r="1.3" fill="#a4a4a4"/></svg><svg class="op" style="left:1075px;top:535px" width="15" height="15" viewBox="0 0 15 15"><path d="M2.3 14 L1 12.7 L7 6.7 C6.3 5 6.7 3 8 1.9 C9.1 1 10.6 0.7 11.9 1.2 L9.7 3.4 L10.1 4.9 L11.6 5.3 L13.8 3.1 C14.3 4.4 14 5.9 13.1 7 C12 8.3 10 8.7 8.3 8 Z" fill="none" stroke="#a4a4a4" stroke-width="1.1" stroke-linejoin="round"/></svg><svg class="op" style="left:1104px;top:535px" width="16" height="14" viewBox="0 0 16 14"><path d="M4 4 H1.5 V12.5 H13 V5.5" fill="none" stroke="#a4a4a4" stroke-width="1.1"/><path d="M5.2 11 L5.6 8.4 L11.6 1.4 L13.6 3.1 L7.6 10.1 Z M10.6 2.6 L12.6 4.3" fill="none" stroke="#a4a4a4" stroke-width="1.1" stroke-linejoin="round"/></svg><svg class="op" style="left:1133px;top:535px" width="16" height="15" viewBox="0 0 16 15"><g fill="none" stroke="#a4a4a4" stroke-width="1.15"><ellipse cx="5" cy="4.8" rx="4" ry="2.6" transform="rotate(45 5 4.8)"/><ellipse cx="10.6" cy="10.3" rx="4" ry="2.6" transform="rotate(45 10.6 10.3)"/></g></svg><svg class="op" style="left:1162px;top:535px" width="16" height="15" viewBox="0 0 16 15"><path d="M6 3.5 L11.5 9 L7.5 13 L2 7.5 Z M3.6 9.1 L5.8 6.9 M5.2 10.7 L7.4 8.5 M6.8 12.3 L9 10.1" fill="none" stroke="#a4a4a4" stroke-width="1.1" stroke-linejoin="round"/><path d="M6 3.5 L8 1.5 L9.5 3 L13.5 1 L14.5 2 L12.5 6 L13.5 7 L11.5 9" fill="none" stroke="#a4a4a4" stroke-width="1.1" stroke-linejoin="round"/></svg><svg class="op" style="left:1192px;top:535px" width="11" height="15" viewBox="0 0 11 15"><path d="M0.5 2.8 H10.5 M3.5 2.8 V1 H7.5 V2.8 M1.6 2.8 V13.8 H9.4 V2.8 M3.8 5 V11.8 M5.5 5 V11.8 M7.2 5 V11.8" fill="none" stroke="#a4a4a4" stroke-width="1.1"/></svg>
<div class="a" style="left:166px;top:559px;width:1087px;height:31px;background:#fff">
<div class="cell" style="left:40px;width:255px">2795.ncbaby.cn</div>
<div class="cell" style="left:295px;width:201px;letter-spacing:0.25px">s002.q.35ba.com</div>
<div class="cell" style="left:496px;width:255px">系统默认</div>
</div>
<div class="hl" style="left:166px;top:589px;width:1087px"></div>
<div class="cb" style="left:179px;top:567px"></div>
<div class="tg" style="left:936px;top:565px"><span>上线</span><b></b></div>
<svg class="op" style="left:1047px;top:568px" width="15" height="11" viewBox="0 0 15 11"><path d="M1 5.5 C4 1 11 1 14 5.5 C11 10 4 10 1 5.5 Z" fill="none" stroke="#a4a4a4" stroke-width="1.1"/><circle cx="7.5" cy="5.5" r="1.3" fill="#a4a4a4"/></svg><svg class="op" style="left:1075px;top:566px" width="15" height="15" viewBox="0 0 15 15"><path d="M2.3 14 L1 12.7 L7 6.7 C6.3 5 6.7 3 8 1.9 C9.1 1 10.6 0.7 11.9 1.2 L9.7 3.4 L10.1 4.9 L11.6 5.3 L13.8 3.1 C14.3 4.4 14 5.9 13.1 7 C12 8.3 10 8.7 8.3 8 Z" fill="none" stroke="#a4a4a4" stroke-width="1.1" stroke-linejoin="round"/></svg><svg class="op" style="left:1104px;top:566px" width="16" height="14" viewBox="0 0 16 14"><path d="M4 4 H1.5 V12.5 H13 V5.5" fill="none" stroke="#a4a4a4" stroke-width="1.1"/><path d="M5.2 11 L5.6 8.4 L11.6 1.4 L13.6 3.1 L7.6 10.1 Z M10.6 2.6 L12.6 4.3" fill="none" stroke="#a4a4a4" stroke-width="1.1" stroke-linejoin="round"/></svg><svg class="op" style="left:1133px;top:566px" width="16" height="15" viewBox="0 0 16 15"><g fill="none" stroke="#a4a4a4" stroke-width="1.15"><ellipse cx="5" cy="4.8" rx="4" ry="2.6" transform="rotate(45 5 4.8)"/><ellipse cx="10.6" cy="10.3" rx="4" ry="2.6" transform="rotate(45 10.6 10.3)"/></g></svg><svg class="op" style="left:1162px;top:566px" width="16" height="15" viewBox="0 0 16 15"><path d="M6 3.5 L11.5 9 L7.5 13 L2 7.5 Z M3.6 9.1 L5.8 6.9 M5.2 10.7 L7.4 8.5 M6.8 12.3 L9 10.1" fill="none" stroke="#a4a4a4" stroke-width="1.1" stroke-linejoin="round"/><path d="M6 3.5 L8 1.5 L9.5 3 L13.5 1 L14.5 2 L12.5 6 L13.5 7 L11.5 9" fill="none" stroke="#a4a4a4" stroke-width="1.1" stroke-linejoin="round"/></svg><svg class="op" style="left:1192px;top:566px" width="11" height="15" viewBox="0 0 11 15"><path d="M0.5 2.8 H10.5 M3.5 2.8 V1 H7.5 V2.8 M1.6 2.8 V13.8 H9.4 V2.8 M3.8 5 V11.8 M5.5 5 V11.8 M7.2 5 V11.8" fill="none" stroke="#a4a4a4" stroke-width="1.1"/></svg>
<div class="a" style="left:166px;top:590px;width:1087px;height:31px;background:#fff">
<div class="cell" style="left:40px;width:255px">2794.ncbaby.cn</div>
<div class="cell" style="left:295px;width:201px;letter-spacing:0.25px">s005.q.35ba.com</div>
<div class="cell" style="left:496px;width:255px">系统默认</div>
</div>
<div class="hl" style="left:166px;top:620px;width:1087px"></div>
<div class="cb" style="left:179px;top:598px"></div>
<div class="tg" style="left:936px;top:596px"><span>上线</span><b></b></div>
<svg class="op" style="left:1047px;top:599px" width="15" height="11" viewBox="0 0 15 11"><path d="M1 5.5 C4 1 11 1 14 5.5 C11 10 4 10 1 5.5 Z" fill="none" stroke="#a4a4a4" stroke-width="1.1"/><circle cx="7.5" cy="5.5" r="1.3" fill="#a4a4a4"/></svg><svg class="op" style="left:1075px;top:597px" width="15" height="15" viewBox="0 0 15 15"><path d="M2.3 14 L1 12.7 L7 6.7 C6.3 5 6.7 3 8 1.9 C9.1 1 10.6 0.7 11.9 1.2 L9.7 3.4 L10.1 4.9 L11.6 5.3 L13.8 3.1 C14.3 4.4 14 5.9 13.1 7 C12 8.3 10 8.7 8.3 8 Z" fill="none" stroke="#a4a4a4" stroke-width="1.1" stroke-linejoin="round"/></svg><svg class="op" style="left:1104px;top:597px" width="16" height="14" viewBox="0 0 16 14"><path d="M4 4 H1.5 V12.5 H13 V5.5" fill="none" stroke="#a4a4a4" stroke-width="1.1"/><path d="M5.2 11 L5.6 8.4 L11.6 1.4 L13.6 3.1 L7.6 10.1 Z M10.6 2.6 L12.6 4.3" fill="none" stroke="#a4a4a4" stroke-width="1.1" stroke-linejoin="round"/></svg><svg class="op" style="left:1133px;top:597px" width="16" height="15" viewBox="0 0 16 15"><g fill="none" stroke="#a4a4a4" stroke-width="1.15"><ellipse cx="5" cy="4.8" rx="4" ry="2.6" transform="rotate(45 5 4.8)"/><ellipse cx="10.6" cy="10.3" rx="4" ry="2.6" transform="rotate(45 10.6 10.3)"/></g></svg><svg class="op" style="left:1162px;top:597px" width="16" height="15" viewBox="0 0 16 15"><path d="M6 3.5 L11.5 9 L7.5 13 L2 7.5 Z M3.6 9.1 L5.8 6.9 M5.2 10.7 L7.4 8.5 M6.8 12.3 L9 10.1" fill="none" stroke="#a4a4a4" stroke-width="1.1" stroke-linejoin="round"/><path d="M6 3.5 L8 1.5 L9.5 3 L13.5 1 L14.5 2 L12.5 6 L13.5 7 L11.5 9" fill="none" stroke="#a4a4a4" stroke-width="1.1" stroke-linejoin="round"/></svg><svg class="op" style="left:1192px;top:597px" width="11" height="15" viewBox="0 0 11 15"><path d="M0.5 2.8 H10.5 M3.5 2.8 V1 H7.5 V2.8 M1.6 2.8 V13.8 H9.4 V2.8 M3.8 5 V11.8 M5.5 5 V11.8 M7.2 5 V11.8" fill="none" stroke="#a4a4a4" stroke-width="1.1"/></svg>
<div class="a" style="left:166px;top:621px;width:1087px;height:31px;background:#fff">
<div class="cell" style="left:40px;width:255px">2793.ncbaby.cn</div>
<div class="cell" style="left:295px;width:201px;letter-spacing:0.25px">s002.q.35ba.com</div>
<div class="cell" style="left:496px;width:255px">系统默认</div>
</div>
<div class="hl" style="left:166px;top:651px;width:1087px"></div>
<div class="cb" style="left:179px;top:629px"></div>
<div class="tg" style="left:936px;top:627px"><span>上线</span><b></b></div>
<svg class="op" style="left:1047px;top:630px" width="15" height="11" viewBox="0 0 15 11"><path d="M1 5.5 C4 1 11 1 14 5.5 C11 10 4 10 1 5.5 Z" fill="none" stroke="#a4a4a4" stroke-width="1.1"/><circle cx="7.5" cy="5.5" r="1.3" fill="#a4a4a4"/></svg><svg class="op" style="left:1075px;top:628px" width="15" height="15" viewBox="0 0 15 15"><path d="M2.3 14 L1 12.7 L7 6.7 C6.3 5 6.7 3 8 1.9 C9.1 1 10.6 0.7 11.9 1.2 L9.7 3.4 L10.1 4.9 L11.6 5.3 L13.8 3.1 C14.3 4.4 14 5.9 13.1 7 C12 8.3 10 8.7 8.3 8 Z" fill="none" stroke="#a4a4a4" stroke-width="1.1" stroke-linejoin="round"/></svg><svg class="op" style="left:1104px;top:628px" width="16" height="14" viewBox="0 0 16 14"><path d="M4 4 H1.5 V12.5 H13 V5.5" fill="none" stroke="#a4a4a4" stroke-width="1.1"/><path d="M5.2 11 L5.6 8.4 L11.6 1.4 L13.6 3.1 L7.6 10.1 Z M10.6 2.6 L12.6 4.3" fill="none" stroke="#a4a4a4" stroke-width="1.1" stroke-linejoin="round"/></svg><svg class="op" style="left:1133px;top:628px" width="16" height="15" viewBox="0 0 16 15"><g fill="none" stroke="#a4a4a4" stroke-width="1.15"><ellipse cx="5" cy="4.8" rx="4" ry="2.6" transform="rotate(45 5 4.8)"/><ellipse cx="10.6" cy="10.3" rx="4" ry="2.6" transform="rotate(45 10.6 10.3)"/></g></svg><svg class="op" style="left:1162px;top:628px" width="16" height="15" viewBox="0 0 16 15"><path d="M6 3.5 L11.5 9 L7.5 13 L2 7.5 Z M3.6 9.1 L5.8 6.9 M5.2 10.7 L7.4 8.5 M6.8 12.3 L9 10.1" fill="none" stroke="#a4a4a4" stroke-width="1.1" stroke-linejoin="round"/><path d="M6 3.5 L8 1.5 L9.5 3 L13.5 1 L14.5 2 L12.5 6 L13.5 7 L11.5 9" fill="none" stroke="#a4a4a4" stroke-width="1.1" stroke-linejoin="round"/></svg><svg class="op" style="left:1192px;top:628px" width="11" height="15" viewBox="0 0 11 15"><path d="M0.5 2.8 H10.5 M3.5 2.8 V1 H7.5 V2.8 M1.6 2.8 V13.8 H9.4 V2.8 M3.8 5 V11.8 M5.5 5 V11.8 M7.2 5 V11.8" fill="none" stroke="#a4a4a4" stroke-width="1.1"/></svg>
<div class="hl" style="left:166px;top:651px;width:1248px"></div>
<div class="hl" style="left:166px;top:341px;width:1246px;background:#e4e7ec"></div>
<div class="vl" style="left:206px;top:310px;height:342px"></div>
<div class="vl" style="left:461px;top:310px;height:342px"></div>
<div class="vl" style="left:662px;top:310px;height:342px"></div>
<div class="vl" style="left:917px;top:310px;height:342px"></div>
<div class="vl" style="left:998px;top:310px;height:342px"></div>
<div class="vl" style="left:1253px;top:310px;height:342px"></div>
<div class="a" style="left:175px;top:662px;font-size:12px;line-height:16px;color:#555">共 2999 条</div>
<svg class="a" style="left:248px;top:664px" width="8" height="12" viewBox="0 0 8 12"><path d="M6 1 L1.5 6 L6 11" fill="none" stroke="#ccc" stroke-width="1.1"/></svg>
<div class="a" style="left:267px;top:660px;width:26px;height:21px;border-radius:2px;background:#4ea1f0;color:#fff;font-size:12px;line-height:21px;text-align:center">1</div>
<div class="a" style="left:302px;top:662px;font-size:12px;line-height:16px;color:#555">2</div>
<div class="a" style="left:327px;top:662px;font-size:12px;line-height:16px;color:#555">3</div>
<div class="a" style="left:343px;top:662px;font-size:12px;line-height:16px;color:#555">...</div>
<div class="a" style="left:364px;top:662px;font-size:12px;line-height:16px;color:#555">300</div>
<svg class="a" style="left:404px;top:664px" width="8" height="12" viewBox="0 0 8 12"><path d="M2 1 L6.5 6 L2 11" fill="none" stroke="#666" stroke-width="1.1"/></svg>
<div class="a" style="left:424px;top:662px;font-size:12px;line-height:16px;color:#aaa">到第</div>
<div class="a" style="left:457px;top:660px;width:32px;height:21px;border:1px solid #e0e3e8;font-size:12px;line-height:19px;text-align:center;color:#333">1</div>
<div class="a" style="left:497px;top:662px;font-size:12px;line-height:16px;color:#aaa">页</div>
<div class="a" style="left:518px;top:660px;width:40px;height:21px;border:1px solid #e0e3e8;font-size:12px;line-height:19px;text-align:center;color:#333">确定</div>
<div class="a" style="left:567px;top:660px;width:74px;height:22px;border:1px solid #e0e3e8;font-size:12px;line-height:23px;padding-left:6px;color:#333">10 条/页</div>
<div class="a" style="left:630px;top:669px;width:0;height:0;border-left:2.5px solid transparent;border-right:2.5px solid transparent;border-top:4px solid #222"></div>
<div class="a" style="left:723px;top:710px;font-size:12px;line-height:16px;color:#555">© 2018 小胖传播 版权所有</div>
<div class="a" style="left:1341px;top:711px;font-size:16px;line-height:20px;color:#2626c4;font-weight:bold;text-shadow:0.5px 0 0 #2626c4;transform-origin:0 0;transform:scaleX(0.69);white-space:nowrap">bbs.594zz.com</div>
</body></html>
